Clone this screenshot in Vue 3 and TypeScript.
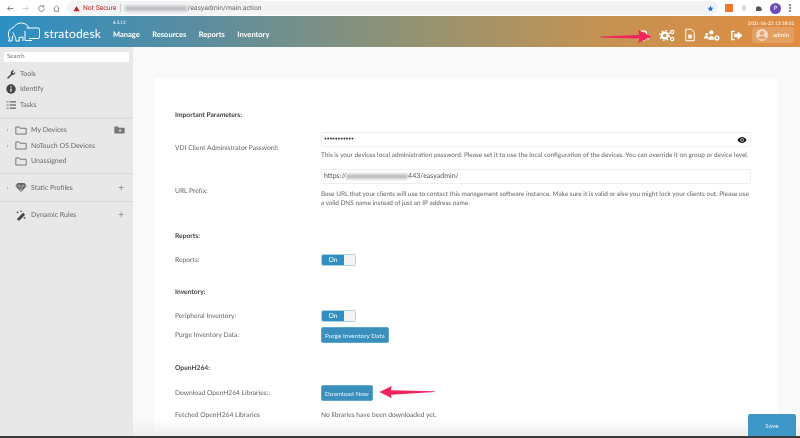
<template>
  <div class="page">
    <div class="browser">
      <div class="nav-icons">
        <svg viewBox="0 0 16 16" class="b-icon"><path d="M13 8H3M7 4 3 8l4 4" fill="none" stroke="#777" stroke-width="1.6" /></svg>
        <svg viewBox="0 0 16 16" class="b-icon"><path d="M3 8h10M9 4l4 4-4 4" fill="none" stroke="#ccc" stroke-width="1.6" /></svg>
        <svg viewBox="0 0 16 16" class="b-icon"><path d="M13 8a5 5 0 1 1-1.5-3.500M12 2v3H9" fill="none" stroke="#777" stroke-width="1.5" /></svg>
        <svg viewBox="0 0 16 16" class="b-icon"><path d="M3 8l5-5 5 5M4.500 7.500V13h7V7.500" fill="none" stroke="#777" stroke-width="1.4" /></svg>
      </div>
      <div class="omnibox">
        <svg viewBox="0 0 16 16" class="warn"><path d="M8 2 15 14H1z" fill="#c5221f" /></svg>
        <span class="not-secure">Not Secure</span>
        <span class="sep"></span>
        <span class="blur-host"></span>
        <span class="url">/easyadmin/main.action</span>
        <svg viewBox="0 0 24 24" class="star"><path d="M12 2l3 7 7 .6-5.300 4.700 1.600 7.200L12 17.700 5.700 21.500l1.600-7.200L2 9.600 9 9z" fill="#1a73e8" /></svg>
      </div>
      <div class="ext-icons">
        <span class="ext-orange"></span>
        <svg viewBox="0 0 16 16" class="ext-snow"><path d="M8 2v12M3 5l10 6M13 5 3 11" stroke="#c4c4c4" stroke-width="2" /></svg>
        <svg viewBox="0 0 16 16" class="ext-puzzle"><path d="M2 6h3a2 2 0 1 1 4 0h3v3a2 2 0 1 1 0 4v1H2z" fill="#555" /></svg>
        <span class="avatar">P</span>
        <span class="dots"><i></i><i></i><i></i></span>
      </div>
    </div>

    <header class="topbar">
      <div class="brand">
        <svg viewBox="0 0 33 20" class="logo">
          <path d="M2.500 17C0 11 2 6.500 6.500 5.500 8.500 2 12.500 .5 16 1.200 19 1.800 21 3.500 22 6" fill="none" stroke="#fff" stroke-width="1" />
          <path d="M19.500 6H31a1.500 1.500 0 0 1 1.500 1.500V15a1.500 1.500 0 0 1-1.500 1.500H22M18 9v9.500h7" fill="none" stroke="#fff" stroke-width="1" />
          <path d="M2.500 17 1.500 19H5L5.500 14M6 10.500C7 14 9 15 9 19h3.500L12 15.500 16 15M16 15V19" fill="none" stroke="#fff" stroke-width="1" />
        </svg>
        <span class="brand-name">stratodesk</span>
      </div>
      <nav class="menu">
        <span class="version">4.5.13</span>
        <a v-for="item in menu" :key="item">{{ item }}</a>
      </nav>
      <div class="top-right">
        <span class="stamp">2021-06-23 13:18:02</span>
        <div class="top-icons">
          <svg viewBox="0 0 20 20" class="t-icon"><path d="M10 3a5 5 0 0 1 5 5v4l2 3H3l2-3V8a5 5 0 0 1 5-5zM8 17h4" fill="none" stroke="#fff" stroke-width="1.800" /></svg>
          <svg viewBox="0 0 24 20" class="t-icon gears">
            <circle cx="8.500" cy="10" r="4.500" fill="none" stroke="#fff" stroke-width="3.500" />
            <circle cx="8.500" cy="10" r="7.500" fill="none" stroke="#fff" stroke-width="2" stroke-dasharray="2.600 3.300" />
            <circle cx="20" cy="4.500" r="2.500" fill="none" stroke="#fff" stroke-width="1.800" />
            <circle cx="20" cy="15.500" r="2.500" fill="none" stroke="#fff" stroke-width="1.800" />
          </svg>
          <svg viewBox="0 0 13 17" class="t-icon doc"><path d="M1 1h7l4 4v11H1z" fill="none" stroke="#fff" stroke-width="1.300" /><path d="M4 8h5v5H4z" fill="#fff" opacity=".85" /></svg>
          <svg viewBox="0 0 26 20" class="t-icon users">
            <circle cx="12" cy="5" r="3.500" fill="#fff" /><circle cx="4.500" cy="8" r="2.500" fill="#fff" />
            <path d="M0 15c0-3 2-4 4-4s3 1 3 4zM7 17c0-4 2-6 5-6 2 0 3 1 4 2v4z" fill="#fff" />
            <circle cx="21" cy="14" r="3" fill="none" stroke="#fff" stroke-width="2.400" />
          </svg>
          <svg viewBox="0 0 22 20" class="t-icon"><path d="M8 3H3v14h5" fill="none" stroke="#fff" stroke-width="2.400" /><path d="M7 7h6V3l8 7-8 7v-4H7z" fill="#fff" /></svg>
          <div class="user-chip">
            <span class="user-face">
              <svg viewBox="0 0 20 20"><circle cx="10" cy="7" r="3.500" fill="#e3a06a" /><path d="M3 17c1-5 4-5.500 7-5.500s6 .5 7 5.500z" fill="#e3a06a" /></svg>
            </span>
            <span>admin</span>
          </div>
        </div>
      </div>
    </header>

    <div class="body">
      <aside class="sidebar">
        <div class="search">Search</div>
        <ul class="tools">
          <li>
            <svg viewBox="0 0 16 16" class="s-icon"><path d="M1.500 14.500 8 8a4 4 0 0 1 5-5.500L10.500 5l.5 1.500 1.500.5L15 4.500A4.500 4.500 0 0 1 9.500 9.500l-6 6z" fill="#444" /></svg>
            Tools
          </li>
          <li>
            <svg viewBox="0 0 16 16" class="s-icon"><circle cx="8" cy="8" r="7.500" fill="#444" /><path d="M8 3.500v2M8 7v5.500" stroke="#e8e8e8" stroke-width="2.200" /></svg>
            Identify
          </li>
          <li>
            <svg viewBox="0 0 16 16" class="s-icon"><path d="M6 3h10M6 8h10M6 13h10" stroke="#444" stroke-width="1.600" /><path d="M1 3h3M1 8h3M1 13h3" stroke="#444" stroke-width="1.600" stroke-dasharray="1.500 .5" /></svg>
            Tasks
          </li>
        </ul>
        <div class="tree first">
          <div v-for="f in folders" :key="f.name" class="tree-row">
            <span class="caret">{{ f.caret ? "›" : "" }}</span>
            <svg viewBox="0 0 18 14" class="folder"><path d="M1 12.500V1.500h5l1.500 2H17v9z" fill="none" stroke="#555" stroke-width="1.200" /></svg>
            <span class="tree-label">{{ f.name }}</span>
            <svg v-if="f.add" viewBox="0 0 18 14" class="folder-add"><path d="M0 13V1h6l2 2h10v10z" fill="#777" /><path d="M10 5.500v5M7.500 8h5" stroke="#e8e8e8" stroke-width="1.400" /></svg>
          </div>
        </div>
        <div class="tree">
          <div class="tree-row">
            <span class="caret">›</span>
            <svg viewBox="0 0 16 14" class="gem"><path d="M3.500 1h9L15.500 5 8 13 .5 5z" fill="#555" /><path d="M1 5h14M5.500 5 8 12l2.500-7M5.500 1.500v3M10.500 1.500v3" stroke="#e8e8e8" stroke-width=".8" fill="none" /></svg>
            <span class="tree-label">Static Profiles</span>
            <span class="plus">+</span>
          </div>
        </div>
        <div class="tree last">
          <div class="tree-row">
            <span class="caret"></span>
            <svg viewBox="0 0 16 16" class="gem"><path d="M2 13 11 4l3 3-9 9z" fill="#444" /><path d="M3 2v3M1.500 3.500h3M8 1v2M7 2h2M13 10v3M11.500 11.500h3" stroke="#444" stroke-width="1" /></svg>
            <span class="tree-label">Dynamic Rules</span>
            <span class="plus">+</span>
          </div>
        </div>
      </aside>
      <span class="grip"><i></i><i></i><i></i></span>

      <main class="content">
        <section class="card">
          <template v-for="s in sections" :key="s.title">
            <h4 :class="['sec-title', s.cls]">{{ s.title }}</h4>
            <div v-for="r in s.rows" :key="r.label" :class="['row', r.cls]">
              <label>{{ r.label }}</label>
              <div class="field">
                <template v-if="r.kind === 'password'">
                  <div class="input">
                    <span class="pw">•••••••••••</span>
                    <svg viewBox="0 0 20 14" class="eye"><path d="M1 7c3-4.500 6-6 9-6s6 1.500 9 6c-3 4.500-6 6-9 6s-6-1.500-9-6z" fill="#111" /><circle cx="10" cy="7" r="3.500" fill="#fff" /><circle cx="10" cy="7" r="2" fill="#111" /></svg>
                  </div>
                  <p class="help">{{ r.help }}</p>
                </template>
                <template v-else-if="r.kind === 'url'">
                  <div class="input">https://<span class="blur-inline"></span>443/easyadmin/</div>
                  <p class="help url-help">{{ r.help }}</p>
                </template>
                <div v-else-if="r.kind === 'toggle'" class="toggle"><span class="on">On</span><span class="knob"></span></div>
                <button v-else-if="r.kind === 'button'" class="btn">{{ r.text }}</button>
                <span v-else class="plain">{{ r.text }}</span>
              </div>
            </div>
          </template>
          <svg viewBox="0 0 64 16" class="arrow arrow-dl"><path d="M0 8 14 1l-1 5 50 1v1l-50 3 1 4z" fill="#f0245f" /></svg>
        </section>
        <div class="fade"></div>
        <button class="save">Save</button>
      </main>
    </div>
    <svg viewBox="0 0 54 16" class="arrow arrow-top"><path d="M54 8 40 1l1 5.500L0 8v1l41 1-1 5z" fill="#f0245f" /></svg>
    <div class="bottom-line"></div>
  </div>
</template>

<script setup lang="ts">
interface Row {
  label: string;
  kind: "password" | "url" | "toggle" | "button" | "text";
  help?: string;
  text?: string;
  cls?: string;
}

interface Section {
  title: string;
  cls: string;
  rows: Row[];
}

const menu = ["Manage", "Resources", "Reports", "Inventory"];

const folders = [
  { name: "My Devices", caret: true, add: true },
  { name: "NoTouch OS Devices", caret: true, add: false },
  { name: "Unassigned", caret: false, add: false },
];

const sections: Section[] = [
  {
    title: "Important Parameters:",
    cls: "first",
    rows: [
      {
        label: "VDI Client Administrator Password:",
        kind: "password",
        cls: "center",
        help: "This is your devices local administration password. Please set it to use the local configuration of the devices. You can override it on group or device level.",
      },
      {
        label: "URL Prefix:",
        kind: "url",
        cls: "center",
        help: "Base URL that your clients will use to contact this management software instance. Make sure it is valid or else you might lock your clients out. Please use a valid DNS name instead of just an IP address name.",
      },
    ],
  },
  {
    title: "Reports:",
    cls: "reports",
    rows: [{ label: "Reports:", kind: "toggle" }],
  },
  {
    title: "Inventory:",
    cls: "inventory",
    rows: [
      { label: "Peripheral Inventory:", kind: "toggle" },
      { label: "Purge Inventory Data:", kind: "button", text: "Purge Inventory Data" },
    ],
  },
  {
    title: "OpenH264:",
    cls: "openh",
    rows: [
      { label: "Download OpenH264 Libraries::", kind: "button", text: "Download Now" },
      { label: "Fetched OpenH264 Libraries", kind: "text", text: "No libraries have been downloaded yet.", cls: "fetched" },
    ],
  },
];
</script>

<style>
html,
body {
  margin: 0;
  overflow: hidden;
}
</style>

<style scoped>
.page {
  position: relative;
  width: 800px;
  height: 438px;
  overflow: hidden;
  display: flex;
  flex-direction: column;
  font-family: Lato, "Liberation Sans", sans-serif;
  color: #555;
  background: #f8f8f8;
  filter: blur(0.35px);
  text-rendering: geometricPrecision;
}

.browser {
  height: 16px;
  display: flex;
  align-items: center;
  background: #fff;
  flex-shrink: 0;
}

.nav-icons {
  display: flex;
  gap: 6.5px;
  padding-left: 5.5px;
  width: 67px;
  box-sizing: border-box;
  flex-shrink: 0;
}

.b-icon {
  width: 9px;
  height: 9px;
  flex-shrink: 0;
}

.omnibox {
  flex: 1;
  height: 14px;
  background: #f1f3f4;
  border-radius: 7px;
  display: flex;
  align-items: center;
  padding: 0 4px 0 6px;
  font-family: Roboto, sans-serif;
  font-size: 6.8px;
}

.warn {
  width: 7px;
  height: 7px;
  margin-right: 3px;
}

.not-secure {
  color: #c5221f;
}

.sep {
  width: 1px;
  height: 8px;
  background: #ccc;
  margin: 0 4px;
}

.blur-host {
  width: 62px;
  height: 5px;
  background: #b9bbbe;
  filter: blur(1.5px);
}

.url {
  color: #666;
}

.star {
  width: 7px;
  height: 7px;
  margin-left: auto;
}

.ext-icons {
  display: flex;
  align-items: center;
  width: 82px;
  flex-shrink: 0;
  padding-left: 7px;
  box-sizing: border-box;
  gap: 7px;
}

.ext-orange {
  width: 8px;
  height: 8px;
  background: #ee7b2c;
}

.ext-snow,
.ext-puzzle {
  width: 8px;
  height: 8px;
}

.avatar {
  width: 11px;
  height: 11px;
  border-radius: 50%;
  background: #6a4bb8;
  color: #fff;
  font-size: 6px;
  text-align: center;
  line-height: 11px;
  font-family: Roboto, sans-serif;
}

.dots {
  display: flex;
  flex-direction: column;
  gap: 1px;
  margin-left: 1px;
}

.dots i {
  width: 2px;
  height: 2px;
  background: #666;
  border-radius: 50%;
}

.topbar {
  height: 31px;
  flex-shrink: 0;
  display: flex;
  align-items: center;
  background: linear-gradient(90deg, #2b8fc4 0%, #5b8d9f 25%, #8c9278 48%, #c49352 75%, #e18c42 100%);
  color: #fff;
  padding: 0 6px 0 7px;
  box-sizing: border-box;
}

.brand {
  display: flex;
  align-items: center;
  gap: 4px;
  width: 106px;
  flex-shrink: 0;
}

.logo {
  width: 33px;
  height: 20px;
}

.brand-name {
  font-size: 12px;
  letter-spacing: 0.2px;
  margin-top: 3px;
}

.menu {
  position: relative;
  display: flex;
  gap: 12.5px;
  font-size: 7.5px;
  font-weight: 700;
  padding-top: 6px;
}

.version {
  position: absolute;
  top: -4px;
  left: 0;
  font-size: 4.5px;
  font-weight: 400;
}

.top-right {
  margin-left: auto;
  display: flex;
  flex-direction: column;
  align-items: flex-end;
  width: 200px;
}

.stamp {
  font-size: 4.8px;
  line-height: 6px;
  margin-top: 1px;
}

.top-icons {
  display: flex;
  align-items: center;
  gap: 9.5px;
}

.t-icon {
  width: 13px;
  height: 13px;
}

.gears {
  width: 16px;
}

.doc {
  width: 10px;
  height: 14px;
}

.users {
  width: 16px;
}

.user-chip {
  display: flex;
  align-items: center;
  gap: 5px;
  width: 42px;
  height: 16px;
  padding-left: 4px;
  box-sizing: border-box;
  border-radius: 2px;
  background: rgba(255, 255, 255, 0.16);
  font-size: 6px;
}

.user-face {
  width: 12px;
  height: 12px;
  border-radius: 50%;
  background: #f3d9c2;
  overflow: hidden;
  display: block;
}

.user-face svg {
  display: block;
}

.body {
  flex: 1;
  display: flex;
  position: relative;
  min-height: 0;
}

.sidebar {
  width: 133px;
  flex-shrink: 0;
  background: #e8e8e8;
  font-size: 7px;
  color: #6a6a6a;
}

.search {
  margin: 5px 4px 0;
  height: 10px;
  line-height: 10px;
  padding-left: 3px;
  background: #fff;
  border-radius: 1px;
  font-size: 6px;
  color: #777;
}

.tools {
  list-style: none;
  margin: 0;
  padding: 4px 0 4px 6px;
  border-bottom: 2px solid #dedede;
}

.tools li {
  display: flex;
  align-items: center;
  gap: 4px;
  height: 15.5px;
}

.s-icon {
  width: 10px;
  height: 10px;
}

.tree {
  padding: 6px 0 5px;
  border-bottom: 1px solid #d8d8d8;
}

.tree.first {
  padding: 4px 0 4px;
}

.tree.last {
  border-bottom: none;
}

.tree-row {
  display: flex;
  align-items: center;
  height: 15.5px;
  padding-right: 8px;
}

.caret {
  width: 15px;
  text-align: center;
  color: #999;
  font-size: 7px;
}

.folder {
  width: 12px;
  height: 9px;
  margin-right: 4px;
}

.gem {
  width: 12px;
  height: 11px;
  margin-right: 4px;
}

.tree-label {
  flex: 1;
}

.folder-add {
  width: 11px;
  height: 8px;
}

.plus {
  font-size: 10px;
  color: #888;
  margin-right: 1px;
}

.grip {
  position: absolute;
  left: 135px;
  top: 73px;
  width: 8px;
  height: 22px;
  background: #dcdcdc;
  border-radius: 2px;
  display: flex;
  flex-direction: column;
  justify-content: center;
  align-items: center;
  gap: 1px;
}

.grip i {
  width: 1.5px;
  height: 1.5px;
  background: #fff;
}

.content {
  flex: 1;
  padding: 31px 23px 0 21px;
  background: #f9f9f9;
  position: relative;
  min-width: 0;
}

.card {
  position: relative;
  background: #fff;
  height: 360px;
  padding: 0 26px 0 21px;
  box-sizing: border-box;
  border-radius: 2px;
  font-size: 6.7px;
  line-height: 9px;
}

.sec-title {
  margin: 0;
  font-size: 6.7px;
  font-weight: 700;
  color: #444;
}

.sec-title.first {
  padding-top: 33px;
  margin-bottom: 12px;
}

.sec-title.reports {
  margin-top: 24px;
  margin-bottom: 13px;
}

.sec-title.inventory {
  margin-top: 22px;
  margin-bottom: 13px;
}

.sec-title.openh {
  margin-top: 21px;
  margin-bottom: 12px;
}

.row {
  display: flex;
  align-items: center;
}

.row label {
  width: 146px;
  flex-shrink: 0;
  color: #666;
}

.row.center label {
  padding-top: 5px;
}

.field {
  flex: 1;
  min-width: 0;
}

.row + .row {
  margin-top: 5px;
}

.row.center + .row.center {
  margin-top: 9px;
}

.row.fetched {
  margin-top: 10px;
}

.input {
  position: relative;
  height: 15px;
  box-sizing: border-box;
  border: 1px solid #eee;
  border-radius: 2px;
  padding-left: 2px;
  font-size: 7px;
  color: #555;
  display: flex;
  align-items: center;
}

.pw {
  font-size: 5px;
  letter-spacing: -0.2px;
  color: #333;
}

.blur-inline {
  width: 62px;
  height: 5px;
  background: #bbb;
  filter: blur(1.5px);
}

.eye {
  position: absolute;
  right: 3px;
  top: 3px;
  width: 10px;
  height: 8px;
}

.help {
  margin: 4px 0 0;
  font-size: 6.45px;
  line-height: 9px;
  color: #666;
}

.help.url-help {
  margin-top: 6px;
}

.toggle {
  display: flex;
  width: 35px;
  height: 12px;
  border: 1px solid #a8d4ea;
  border-radius: 2px;
  box-sizing: border-box;
  overflow: hidden;
}

.on {
  width: 22px;
  background: #2f8fc2;
  color: #fff;
  text-align: center;
  line-height: 10px;
}

.knob {
  flex: 1;
  background: #f4f4f4;
}

.btn {
  display: block;
  font: inherit;
  font-size: 6.4px;
  color: #e8f3f9;
  background: #3a8fbd;
  border: 1px solid #5ca8d0;
  border-radius: 2px;
  height: 16px;
  padding: 0 3px;
  line-height: 13px;
}

.plain {
  color: #666;
}

.arrow {
  position: absolute;
}

.arrow-dl {
  left: 223px;
  top: 307px;
  width: 61px;
  height: 14px;
}

.arrow-top {
  left: 599px;
  top: 29px;
  width: 54px;
  height: 15px;
}

.fade {
  position: absolute;
  left: 0;
  right: 0;
  bottom: 2px;
  height: 18px;
  background: linear-gradient(rgba(238, 238, 238, 0), #eee);
  pointer-events: none;
}

.save {
  position: absolute;
  right: 4px;
  bottom: 2px;
  width: 48px;
  height: 22px;
  background: #3d98c7;
  color: #e6f2f8;
  border: none;
  border-radius: 2px 2px 0 0;
  font: 6.5px Lato, "Liberation Sans", sans-serif;
}

.bottom-line {
  position: absolute;
  left: 0;
  right: 0;
  bottom: 0;
  height: 2px;
  background: #3a3a3a;
}
</style>
